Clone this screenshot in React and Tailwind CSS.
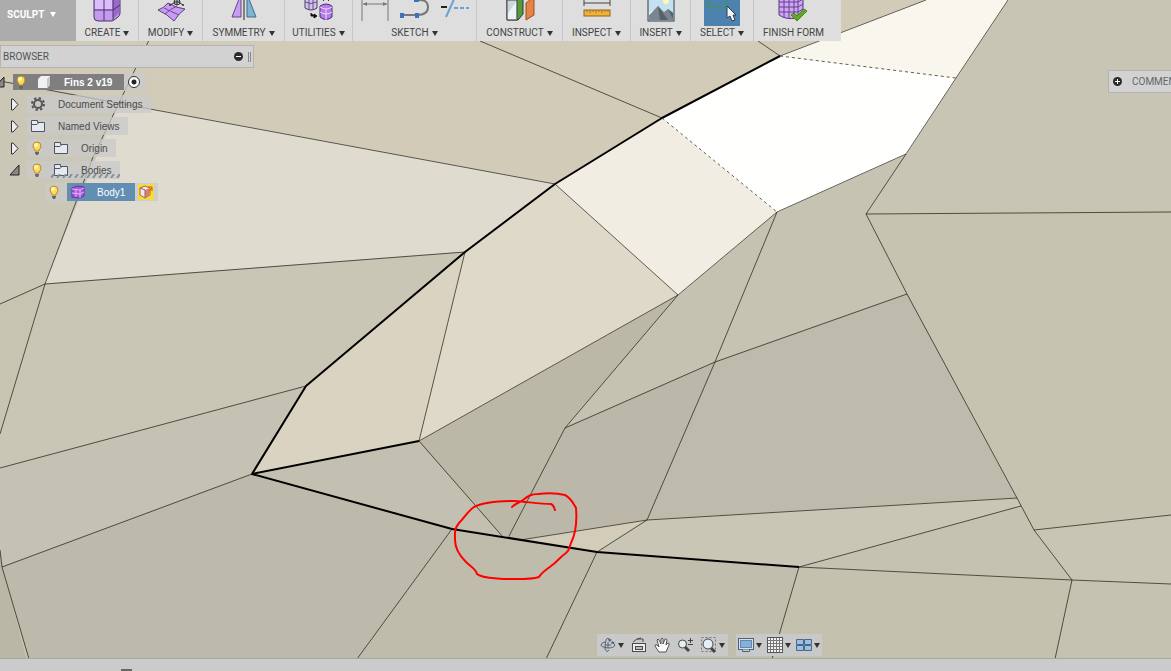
import { useState } from 'react';

const faces = [
  { points: '0,0 1008,0 780,56 662,118 555,184 0,81', fill: '#d1cbb8' },
  { points: '0,81 119,103 45,284 0,304', fill: '#cbc7b6' },
  { points: '0,304 45,284 0,434', fill: '#c8c4b2' },
  { points: '119,103 555,184 465,252 45,284', fill: '#dfdbcf' },
  { points: '45,284 465,252 306,386 0,468 0,434', fill: '#c9c6b5' },
  { points: '0,468 306,386 252,474 2,567 0,550', fill: '#c5c2b3' },
  { points: '0,550 2,567 29,671 0,671', fill: '#bbb7a6' },
  { points: '2,567 252,474 452,529 357,659 357,671 29,671 29,659', fill: '#bebaab' },
  { points: '452,529 597,552 546,659 546,671 357,671 357,659', fill: '#c0bcac' },
  { points: '597,552 799,567 772,659 772,671 546,671 546,659', fill: '#c1bead' },
  { points: '799,567 1072,580 1055,659 1055,671 772,671 772,659', fill: '#c4c1af' },
  { points: '1072,580 1171,584 1171,671 1055,671 1055,659', fill: '#c5c2b1' },
  { points: '252,474 419,441 503,537 452,529', fill: '#c3c0b1' },
  { points: '419,441 678,295 565,428 508,538 503,537', fill: '#bbb8a7' },
  { points: '678,295 777,212 715,362 565,428', fill: '#c5c2b2' },
  { points: '777,212 906,154 866,214 907,294 715,362', fill: '#c6c3b3' },
  { points: '565,428 715,362 647,520 520,540 508,538', fill: '#bcb8a9' },
  { points: '715,362 907,294 1017,498 647,520', fill: '#bebbac' },
  { points: '520,540 647,520 597,552', fill: '#d2ccb9' },
  { points: '647,520 1017,498 1021,506 799,567 597,552', fill: '#cac6b5' },
  { points: '1021,506 1034,530 1072,580 799,567', fill: '#c5c2b2' },
  { points: '1008,0 1171,0 1171,212 866,214 906,154 956,78', fill: '#c8c5b4' },
  { points: '866,214 1171,212 1171,515 1034,530', fill: '#c6c3b1' },
  { points: '1034,530 1171,515 1171,584 1072,580', fill: '#c9c5b4' },
  { points: '465,252 419,441 252,474 306,386', fill: '#dad3c1' },
  { points: '555,184 678,295 419,441 465,252', fill: '#dfd9ca' },
  { points: '662,118 777,212 678,295 555,184', fill: '#f1ede3' },
  { points: '780,56 956,78 906,154 777,212 662,118', fill: '#fffffd' },
  { points: '780,56 926,0 1008,0 956,78', fill: '#f9f6ed' },
];

const edges = [
  '0,81 150,109 555,184 678,295 777,212 906,154 956,78 1008,0',
  '150,38 119,103 93,157 45,284 0,434',
  '0,304 45,284 465,252 419,441 678,295 565,428 508,538',
  '0,468 306,386',
  '0,550 2,567 29,659',
  '2,567 252,474',
  '452,529 357,659',
  '597,552 546,659',
  '799,567 772,659',
  '799,567 1072,580 1171,584',
  '1072,580 1055,659',
  '480,41 662,118',
  '758,41 780,56 926,0',
  '777,212 715,362 647,520 597,552',
  '906,154 866,214 907,294 1017,498 1034,530 1072,580',
  '866,214 1171,212',
  '907,294 715,362 565,428',
  '419,441 503,537',
  '520,540 647,520 1017,498',
  '1021,506 799,567',
  '1034,530 1171,515',
];

const creases = ['780,56 662,118 555,184 465,252 306,386 252,474 419,441', '252,474 452,529 597,552 799,567'];

function ModelView() {
  return (
    <svg
      className="absolute inset-0 h-full w-full"
      viewBox="0 0 1171 671"
      preserveAspectRatio="xMinYMin slice"
      aria-hidden="true"
    >
      {faces.map((face) => (
        <polygon key={face.points} points={face.points} fill={face.fill} stroke={face.fill} />
      ))}
      <g fill="none" stroke="#1c1b14" strokeOpacity="0.7">
        {edges.map((points) => (
          <polyline key={points} points={points} />
        ))}
        <path d="M780 56 956 78M662 118 777 212" strokeDasharray="3 3" />
      </g>
      <g fill="none" stroke="#000" strokeWidth="2" strokeLinejoin="round">
        {creases.map((points) => (
          <polyline key={points} points={points} />
        ))}
      </g>
      {/* Markup pen */}
      <path
        d="M512 507C514 504 519 503 523 500C528 496 531 494 538 494C547 493 557 493 565 495C571 498 573 503 576 508C577 520 576 533 571 543C569 548 570 550 566 553C560 557 557 562 551 566C546 570 542 572 539 577C530 580 514 579 503 579C493 578 481 578 477 574C476 569 470 566 466 562C459 555 455 549 455 540C455 533 454 529 459 523C464 518 468 511 474 507C484 502 502 501 515 501C528 502 541 504 551 504C554 505 554 508 555 510"
        fill="none"
        stroke="#f00"
        strokeWidth="2"
        strokeLinecap="round"
        strokeLinejoin="round"
      />
    </svg>
  );
}

function Caret({ className = 'text-[#333]' }) {
  return (
    <svg className={`h-[5px] w-[6px] shrink-0 ${className}`} viewBox="0 0 6 5" fill="currentColor" aria-hidden="true">
      <path d="M0 0h6L3 5z" />
    </svg>
  );
}

/* Toolbar icons */

function CreateIcon() {
  return (
    <svg className="h-[26px] w-[30px]" viewBox="0 0 30 26">
      <path d="M2-4 8-8H28V13Q28 15 26 17L22 20Q21 21 19 21H6Q2 21 2 17Z" fill="#c49af0" stroke="#4b3463" />
      <path d="M21-4 27-8V13L21 19Z" fill="#9868cc" />
      <path d="M3 0H20V9H3Z" fill="#dcbeff" />
      <path d="M12-2V21M2 10H21L28 5M21-2V20" fill="none" stroke="#4b3463" />
    </svg>
  );
}

function ModifyIcon() {
  return (
    <svg className="h-[26px] w-[30px]" viewBox="0 0 30 26">
      <path d="M2 10Q8 8 12 3Q20 8 29 9Q23 13 18 21Q11 14 2 10Z" fill="#c99bf5" stroke="#5a3c78" />
      <path d="M8 8Q14 11 23 15M21 6Q14 9 9 14" fill="none" stroke="#6b4690" />
      <circle cx="21" cy="2" r="3" fill="#bbb" stroke="#333" />
      <path d="M17-2H25M18 3 14 5M24 3 27 5M21-1V5M18 2H24" fill="none" stroke="#333" />
      <circle cx="14" cy="5" r="1" fill="#333" />
      <circle cx="27" cy="5" r="1" fill="#333" />
    </svg>
  );
}

function SymmetryIcon() {
  return (
    <svg className="h-[26px] w-[30px]" viewBox="0 0 30 26">
      <path d="M12-6V17H3Z" fill="#c79cf3" stroke="#64477f" />
      <path d="M18-6V17H27Z" fill="#7bb5d8" stroke="#456a8a" />
      <path d="M15 0V20" stroke="#222" />
    </svg>
  );
}

function UtilitiesIcon() {
  return (
    <svg className="h-[26px] w-[30px]" viewBox="0 0 30 26">
      <path d="M1-3H13V8Q7 12 1 8Z" fill="#d2c5e4" stroke="#4e3c70" />
      <path d="M5-3V10M9-3V10M1 2Q7 5 13 2" fill="none" stroke="#6a4a99" />
      <path d="M16 6Q22 2 28 6V17Q22 22 16 17Z" fill="#b47be9" stroke="#4b2b7b" />
      <path d="M16 7Q22 11 28 7M16 12Q22 16 28 12M22 9V20" fill="none" stroke="#ead8ff" />
      <path d="M7 13V16H11M10 14 13 16 10 18Z" fill="#111" stroke="#111" />
      <path d="M19 0h1M24 0h1" stroke="#333" strokeWidth="2" />
    </svg>
  );
}

function SketchIcon() {
  return (
    <svg className="h-[26px] w-[110px]" viewBox="0 0 110 26">
      <path d="M2-2V21M28-2V21M3 4H27" stroke="#777" />
      <path d="M3 4 7 2V6ZM27 4 23 2V6Z" fill="#777" />
      <path d="M57 0Q68-1 68 7T57 15H42" fill="none" stroke="#777" strokeWidth="2" />
      <path d="M40 13H44V18H40ZM55 13H59V18H55ZM54-2H59V2H54Z" fill="#3d6fc4" />
      <path d="M81 7H87" stroke="#222" strokeWidth="2" />
      <path d="M95-3 86 17" stroke="#6d9fd8" strokeWidth="2" />
      <path d="M94 8H109" stroke="#6d9fd8" strokeWidth="2" strokeDasharray="4 2" />
    </svg>
  );
}

function ConstructIcon() {
  return (
    <svg className="h-[26px] w-[30px]" viewBox="0 0 30 26">
      <path d="M2 0 6-4H18V14L13 20H2Z" fill="#549b3c" stroke="#333" />
      <path d="M2 0H12V20H2Z" fill="#cbd5dc" stroke="#444" />
      <path d="M3 13 11 2V19H3Z" fill="#eef3f6" />
      <path d="M21 3 29-3V15L21 20Z" fill="#e78445" stroke="#94502a" />
    </svg>
  );
}

function InspectIcon() {
  return (
    <svg className="h-[26px] w-[30px]" viewBox="0 0 30 26">
      <path d="M2 3H28M2 0V6M28 0V6" stroke="#444" />
      <rect x="2" y="10" width="26" height="6" fill="#eeb23c" stroke="#94651c" />
      <path d="M5 10V12M8 10V13M11 10V12M14 10V13M17 10V12M20 10V13M23 10V12M26 10V12" stroke="#a87420" />
    </svg>
  );
}

function InsertIcon() {
  return (
    <svg className="h-[26px] w-[30px]" viewBox="0 0 30 26">
      <rect x="2" y="-6" width="26" height="27" fill="#c5e1f0" stroke="#2c3e4b" />
      <circle cx="20" cy="1" r="3" fill="#fff6bb" />
      <path d="M3 15 12 6 18 12 22 9 27 13V20H3Z" fill="#7a8590" />
      <path d="M12 6 22 20H14ZM22 9 27 13V19Z" fill="#56616d" />
      <path d="M3 13 8 10 3 15Z" fill="#f3f8fa" />
    </svg>
  );
}

function SelectIcon() {
  return (
    <svg className="h-[26px] w-[36px] bg-[#4d82ae]" viewBox="0 0 36 26">
      <path d="M4-2V7H23V-2" fill="none" stroke="#3c9a42" />
      <path d="M23 6V18L26 16 28 21 31 20 29 15H32Z" fill="#f4f6f8" stroke="#2f3b48" />
    </svg>
  );
}

function FinishIcon() {
  return (
    <svg className="h-[26px] w-[30px]" viewBox="0 0 30 26">
      <path d="M1-5H25V11L19 18Q8 20 1 15Z" fill="#cfa5f6" stroke="#553577" />
      <path d="M6-2V17M11-2V18M16-2V18M20-2V16M1 2H20L25-1M1 7H20L25 4M1 12H20L25 9" fill="none" stroke="#65408c" />
      <path d="M13 15 16 13 19 16 26 9 29 11 19 21Z" fill="#61a925" stroke="#4a861d" />
    </svg>
  );
}

const tools = [
  { label: 'CREATE', icon: CreateIcon, width: 'w-[63px]' },
  { label: 'MODIFY', icon: ModifyIcon, width: 'w-[64px]' },
  { label: 'SYMMETRY', icon: SymmetryIcon, width: 'w-[82px]' },
  { label: 'UTILITIES', icon: UtilitiesIcon, width: 'w-[68px]' },
  { label: 'SKETCH', icon: SketchIcon, width: 'w-[124px]' },
  { label: 'CONSTRUCT', icon: ConstructIcon, width: 'w-[86px]' },
  { label: 'INSPECT', icon: InspectIcon, width: 'w-[68px]' },
  { label: 'INSERT', icon: InsertIcon, width: 'w-[60px]' },
  { label: 'SELECT', icon: SelectIcon, width: 'w-[63px]' },
];

function Toolbar() {
  return (
    <header className="flex h-[41px] w-fit bg-[#dedede] text-[10px] text-[#444]">
      <button className="flex w-[76px] items-center gap-[6px] bg-[#acacac] pb-[13px] pl-[7px] font-bold text-white">
        SCULPT
        <Caret className="text-white" />
      </button>
      {tools.map(({ label, icon: Icon, width }) => (
        <button key={label} className={`flex flex-col items-center border-r border-[#c6c6c6] ${width}`}>
          <Icon />
          <span className="flex items-center gap-[3px] leading-[14px]">
            {label}
            <Caret />
          </span>
        </button>
      ))}
      <button className="flex flex-col items-center pr-[17px] pl-[9px]">
        <FinishIcon />
        <span className="leading-[14px]">FINISH FORM</span>
      </button>
    </header>
  );
}

/* Browser tree icons */

function Bulb() {
  return (
    <svg className="h-[14px] w-[10px] shrink-0" viewBox="0 0 10 14">
      <path d="M3 9Q1 7 1 5A4 4 0 0 1 9 5Q9 7 7 9V10H3Z" fill="#ffdb55" stroke="#b68d2c" />
      <circle cx="4" cy="4" r="2" fill="#fff4b4" />
      <path d="M3 11H7V12L6 14H4L3 12Z" fill="#666" />
    </svg>
  );
}

function Folder() {
  return (
    <svg className="h-[14px] w-[14px] shrink-0" viewBox="0 0 14 14">
      <path d="M0.5 12.5V1.5H6.5V3.5H13.5V12.5Z" fill="#e6eaee" stroke="#4c5560" />
      <path d="M1 5.5H6L8 3.5" fill="none" stroke="#4c5560" />
    </svg>
  );
}

function Gear() {
  return (
    <svg className="h-[14px] w-[14px] shrink-0" viewBox="0 0 14 14" fill="none" stroke="#555">
      <circle cx="7" cy="7" r="6" strokeWidth="2" strokeDasharray="2.4 2.3" />
      <circle cx="7" cy="7" r="4" strokeWidth="2" />
    </svg>
  );
}

function Cube() {
  return (
    <svg className="h-[14px] w-[14px] shrink-0" viewBox="0 0 14 14">
      <path d="M1 4 4 1H13V10L10 13H1Z" fill="#f1f1f1" />
      <path d="M10 4 13 1V10L10 13Z" fill="#c8c8c8" />
    </svg>
  );
}

function BodyIcon() {
  return (
    <svg className="h-[14px] w-[14px] shrink-0" viewBox="0 0 14 14">
      <path d="M1 3 6 1 13 2V11L9 13 1 12Z" fill="#a956dc" stroke="#6d2f98" />
      <path d="M1 4 9 5 13 3M9 5V13M1 8 9 9 13 7M5 4V12" fill="none" stroke="#e0b9f8" />
    </svg>
  );
}

function FormEditIcon() {
  return (
    <svg className="h-[16px] w-[16px] shrink-0 bg-[#f0dc40]" viewBox="0 0 16 16">
      <path d="M2 4 7 2 12 4V11L7 14 2 11Z" fill="#f3e8e4" stroke="#a96b38" />
      <path d="M7 6 12 4V11L7 14Z" fill="#d98551" />
      <path d="M2 4 7 6V14" fill="none" stroke="#a05599" />
      <path d="M10 3H14V7M14 4 11 7" fill="none" stroke="#d94c25" />
    </svg>
  );
}

function Arrow({ open }) {
  return open ? (
    <svg className="h-[12px] w-[11px] shrink-0" viewBox="0 0 11 12">
      <path d="M10 1V11H1Z" fill="#888" stroke="#222" />
    </svg>
  ) : (
    <svg className="h-[13px] w-[11px] shrink-0" viewBox="0 0 11 13">
      <path d="M2.5 1V12H4L9 6.5 4 1Z" fill="#eee" stroke="#333" />
    </svg>
  );
}

function TreeRow({ label, open = false, children }) {
  return (
    <li className="flex h-[18px] items-center">
      <button className="flex w-[27px] justify-start pl-[9px]" aria-expanded={open} aria-label={label}>
        <Arrow open={open} />
      </button>
      <div className="flex h-full items-center bg-[#c9c9c9]/75 pr-[8px]">{children}</div>
    </li>
  );
}

function Browser() {
  const [active, setActive] = useState(true);

  return (
    <section className="w-[254px]">
      <div className="flex h-[23px] items-center border border-[#b4b4b4] bg-[#d2d2d2] pr-[2px] pl-[2px] text-[10px] text-[#555]">
        <h2 className="flex-1">BROWSER</h2>
        <button className="mr-[5px]" aria-label="Collapse browser">
          <svg className="h-[9px] w-[9px]" viewBox="0 0 9 9">
            <circle cx="4.5" cy="4.5" r="4.5" fill="#2b2b2b" />
            <path d="M2 4.5H7" stroke="#fff" />
          </svg>
        </button>
        <span className="h-[10px] w-[3px] border-x border-[#888]" />
      </div>

      <ul className="mt-[5px] flex flex-col gap-[4px] font-['Liberation_Sans',sans-serif] text-[10px] text-[#4c4c4c]">
        <li className="flex h-[18px] items-center">
          <button className="flex w-[13px] justify-end overflow-hidden pr-[8px]" aria-label="Fins 2 v19" aria-expanded="true">
            <Arrow open />
          </button>
          <div className="flex h-[16px] w-[111px] items-center bg-[#7f7f7f] pl-[3px] font-bold text-white">
            <Bulb />
            <span className="ml-[11px] flex">
              <Cube />
            </span>
            <label className="ml-[13px]" htmlFor="activate">
              Fins 2 v19
            </label>
          </div>
          <div className="flex h-full w-[22px] items-center bg-[#c9c9c9]/75 pl-[4px]">
            <input
              id="activate"
              type="radio"
              checked={active}
              onChange={() => setActive(true)}
              className="size-[12px] appearance-none rounded-full border border-[#333] bg-[radial-gradient(#222_0_2px,#fff_3px)]"
            />
          </div>
        </li>
        <TreeRow label="Document Settings">
          <span className="mr-[13px] ml-[4px] flex">
            <Gear />
          </span>
          Document Settings
        </TreeRow>
        <TreeRow label="Named Views">
          <span className="mr-[13px] ml-[4px] flex">
            <Folder />
          </span>
          Named Views
        </TreeRow>
        <TreeRow label="Origin">
          <span className="mr-[13px] ml-[5px] flex gap-[12px]">
            <Bulb />
            <Folder />
          </span>
          Origin
        </TreeRow>
        <TreeRow label="Bodies" open>
          <span className="mr-[13px] ml-[5px] flex gap-[12px]">
            <Bulb />
            <Folder />
          </span>
          <span className="relative">
            Bodies
            <svg className="absolute bottom-0 -left-[30px] h-[4px] w-[69px]" viewBox="0 0 69 4">
              <path
                d="M0 4 3 0M6 4 9 0M12 4 15 0M18 4 21 0M24 4 27 0M30 4 33 0M36 4 39 0M42 4 45 0M48 4 51 0M54 4 57 0M60 4 63 0M66 4 69 0"
                stroke="#8490a0"
                strokeWidth="2"
              />
            </svg>
          </span>
        </TreeRow>
        <li className="ml-[45px] flex h-[18px] w-fit items-center bg-[#c9c9c9]/75 pr-[4px] pl-[4px]">
          <Bulb />
          <button className="mr-[3px] ml-[8px] flex h-full w-[68px] items-center gap-[12px] bg-[#628eb3] pl-[4px] text-white">
            <BodyIcon />
            Body1
          </button>
          <FormEditIcon />
        </li>
      </ul>
    </section>
  );
}

/* Navigation bar icons */

function OrbitIcon() {
  return (
    <svg className="h-[16px] w-[16px]" viewBox="0 0 16 16" fill="none" stroke="#536474">
      <path d="M9 2Q7 0 6 3T5 12Q7 16 9 13" />
      <path d="M5 5Q1 6 1 8T8 11Q14 11 15 8L12 5M8 5V11M5 8H11" />
      <path d="M8 1 12 3 9 5ZM11 7 12 4 15 6Z" fill="#536474" strokeWidth="0" />
    </svg>
  );
}

function LookAtIcon() {
  return (
    <svg className="h-[16px] w-[16px]" viewBox="0 0 16 16" fill="none" stroke="#4a4a4a">
      <rect x="1.5" y="6.5" width="13" height="8" fill="#eee" />
      <rect x="4.5" y="9.5" width="7" height="3" fill="#bbb" />
      <path d="M2 5 6 2H12V5M6 2 10 1" />
    </svg>
  );
}

function HandIcon() {
  return (
    <svg className="h-[16px] w-[16px]" viewBox="0 0 16 16">
      <path
        d="M5 15 1 9Q1 7 3 8L5 10 3 3Q4 1 5 3L7 7V2Q8 0 9 2V7L11 2Q12 1 13 3L12 8 14 6Q16 6 15 8L12 15Z"
        fill="#fafafa"
        stroke="#555"
      />
    </svg>
  );
}

function ZoomIcon() {
  return (
    <svg className="h-[16px] w-[16px]" viewBox="0 0 16 16" fill="none" stroke="#444">
      <path d="M8 10 12 14" strokeWidth="3" />
      <circle cx="5.5" cy="7" r="4" fill="#e5f0f5" />
      <path d="M11 3.5H16M13.5 1V6M11 7.5H16" />
    </svg>
  );
}

function FitIcon() {
  return (
    <svg className="h-[16px] w-[17px]" viewBox="0 0 17 16" fill="none" stroke="#444">
      <rect x="1.5" y="0.5" width="14" height="14" strokeDasharray="2 2" stroke="#777" />
      <path d="M11 11 15 15" strokeWidth="3" />
      <circle cx="8" cy="7" r="5" fill="#e5f0f5" />
    </svg>
  );
}

function DisplayIcon() {
  return (
    <svg className="h-[16px] w-[16px]" viewBox="0 0 16 16" stroke="#4d6379">
      <rect x="0.5" y="1.5" width="15" height="11" fill="#d7e0e8" />
      <rect x="2.5" y="3.5" width="11" height="7" fill="#86afd9" stroke="#6288b0" />
      <path d="M4.5 12.5V14.5H11.5V12.5" fill="#c5ccd2" />
    </svg>
  );
}

function GridIcon() {
  return (
    <svg className="h-[16px] w-[16px]" viewBox="0 0 16 16">
      <rect x="0.5" y="0.5" width="15" height="15" fill="#f2f2f2" stroke="#555" />
      <path d="M3.5 1V15M6.5 1V15M9.5 1V15M12.5 1V15M1 3.5H15M1 6.5H15M1 9.5H15M1 12.5H15" stroke="#777" />
    </svg>
  );
}

function ViewportsIcon() {
  return (
    <svg className="h-[16px] w-[16px]" viewBox="0 0 16 16" fill="#9cbfe2" stroke="#48678a">
      <path d="M0.5 2.5H7.5V7.5H0.5ZM8.5 2.5H15.5V7.5H8.5ZM0.5 8.5H7.5V13.5H0.5ZM8.5 8.5H15.5V13.5H8.5Z" />
    </svg>
  );
}

function NavButton({ label, menu, children }) {
  return (
    <button className="flex items-center gap-[2px]" aria-label={label}>
      {children}
      {menu && <Caret />}
    </button>
  );
}

function NavBar() {
  return (
    <nav className="flex gap-[8px] pb-[2px] pl-[51%]">
      <div className="flex h-[22px] items-center gap-[7px] bg-[#c9c9c9] px-[3px]">
        <NavButton label="Orbit" menu>
          <OrbitIcon />
        </NavButton>
        <NavButton label="Look at">
          <LookAtIcon />
        </NavButton>
        <NavButton label="Pan">
          <HandIcon />
        </NavButton>
        <NavButton label="Zoom">
          <ZoomIcon />
        </NavButton>
        <NavButton label="Fit" menu>
          <FitIcon />
        </NavButton>
      </div>
      <div className="flex h-[22px] items-center gap-[5px] bg-[#c9c9c9] px-[2px]">
        <NavButton label="Display settings" menu>
          <DisplayIcon />
        </NavButton>
        <NavButton label="Grid and snaps" menu>
          <GridIcon />
        </NavButton>
        <NavButton label="Viewports" menu>
          <ViewportsIcon />
        </NavButton>
      </div>
    </nav>
  );
}

export default function App() {
  return (
    <div className="relative isolate flex min-h-screen flex-col overflow-hidden bg-[#c8c5b4] font-[Roboto,sans-serif]">
      <div className="absolute inset-0 -z-10">
        <ModelView />
      </div>

      <Toolbar />

      <main className="flex flex-1 items-start justify-between pt-[4px]">
        <Browser />
        <button className="mt-[25px] flex h-[23px] w-[63px] items-center gap-[10px] overflow-hidden border border-r-0 border-[#b4b4b4] bg-[#d2d2d2] pl-[4px] text-[10px] text-[#666]">
          <svg className="h-[9px] w-[9px] shrink-0" viewBox="0 0 9 9">
            <circle cx="4.5" cy="4.5" r="4.5" fill="#2b2b2b" />
            <path d="M2 4.5H7M4.5 2V7" stroke="#fff" />
          </svg>
          COMMENTS
        </button>
      </main>

      <NavBar />

      <footer className="flex h-[13px] items-end border-t border-[#aaa99f] bg-[#cbcbcb] pl-[121px]">
        <span className="h-[2px] w-[11px] bg-[#666]" />
      </footer>
    </div>
  );
}
